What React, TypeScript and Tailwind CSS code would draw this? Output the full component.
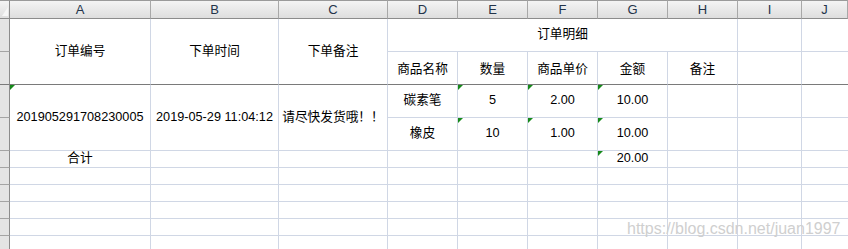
import React from 'react';

const GRID = 'border-[#d0d7e5]';

interface CellProps {
  className?: string;
  mark?: boolean;
  dark?: boolean;
  children?: React.ReactNode;
}

// plain worksheet cell: right + bottom grid line, optional green "number as text" mark
const Cell: React.FC<CellProps> = ({ className = '', mark, dark, children }) => (
  <div
    className={`relative flex items-center justify-center border-r border-b border-r-[#d0d7e5] ${
      dark ? 'border-b-[#7a7a7a]' : 'border-b-[#d0d7e5]'
    } whitespace-nowrap overflow-visible ${className}`}
  >
    {mark && (
      <svg className="absolute left-0 top-0" width="5" height="5" viewBox="0 0 5 5">
        <polygon points="0,0 5,0 0,5" fill="#16891b" />
      </svg>
    )}
    {children}
  </div>
);

const RowHead: React.FC<{ dark?: boolean }> = ({ dark }) => (
  <div
    className={`bg-[#e4e4e4] border-r border-b border-r-[#8c8c8c] ${
      dark ? 'border-b-[#7a7a7a]' : 'border-b-[#a4a4a4]'
    }`}
  />
);

const letters = ['A', 'B', 'C', 'D', 'E', 'F', 'G', 'H', 'I', 'J'];

const App: React.FC = () => {
  return (
    <div className="relative w-[848px] h-[249px] overflow-hidden bg-white font-['Liberation_Sans','Noto_Sans_CJK_SC',sans-serif] text-[12.7px] text-black">
      <div className="grid grid-cols-[10px_141px_128px_109px_70px_70px_70px_70px_70px_64px_1fr] grid-rows-[19px_33px_33px_33px_33px_17px_17px_17px_17px_17px_17px]">
        {/* column header row */}
        <div className="relative border-t border-t-[#9a9a9a] bg-gradient-to-b from-[#f4f4f4] to-[#dedede] border-r border-b border-r-[#8c8c8c] border-b-[#8c8c8c]">
          <svg className="absolute left-[2px] top-[6px]" width="6" height="9" viewBox="0 0 6 9">
            <polygon points="6,0 6,9 0,9" fill="#f6f6f6" />
          </svg>
        </div>
        {letters.map((l) => (
          <div
            key={l}
            className="flex items-center justify-center border-t border-t-[#9a9a9a] bg-gradient-to-b from-[#f4f4f4] to-[#dedede] border-r border-b border-r-[#a8a8a8] border-b-[#8c8c8c] text-[13px] text-[#23344a]"
          >
            {l}
          </div>
        ))}

        {/* row 1 */}
        <RowHead />
        <Cell className="row-span-2" dark>订单编号</Cell>
        <Cell className="row-span-2" dark>下单时间</Cell>
        <Cell className="row-span-2" dark>下单备注</Cell>
        <Cell className="col-span-5">订单明细</Cell>
        <Cell />
        <div className={`border-b ${GRID}`} />

        {/* row 2 */}
        <RowHead dark />
        <Cell dark className="pt-[3px]">商品名称</Cell>
        <Cell dark className="pt-[3px]">数量</Cell>
        <Cell dark className="pt-[3px]">商品单价</Cell>
        <Cell dark className="pt-[3px]">金额</Cell>
        <Cell dark className="pt-[3px]">备注</Cell>
        <Cell dark />
        <div className="border-b border-b-[#7a7a7a]" />

        {/* row 3 */}
        <RowHead />
        <Cell className="row-span-2" mark>201905291708230005</Cell>
        <Cell className="row-span-2">2019-05-29 11:04:12</Cell>
        <Cell className="row-span-2">请尽快发货哦！！</Cell>
        <Cell>碳素笔</Cell>
        <Cell mark>5</Cell>
        <Cell mark>2.00</Cell>
        <Cell mark>10.00</Cell>
        <Cell />
        <Cell />
        <div className={`border-b ${GRID}`} />

        {/* row 4 */}
        <RowHead />
        <Cell>橡皮</Cell>
        <Cell mark>10</Cell>
        <Cell mark>1.00</Cell>
        <Cell mark>10.00</Cell>
        <Cell />
        <Cell />
        <div className={`border-b ${GRID}`} />

        {/* row 5 */}
        <RowHead />
        <Cell>合计</Cell>
        <Cell />
        <Cell />
        <Cell />
        <Cell />
        <Cell />
        <Cell mark>20.00</Cell>
        <Cell />
        <Cell />
        <div className={`border-b ${GRID}`} />

        {/* empty rows */}
        {[0, 1, 2, 3, 4, 5].map((r) => (
          <React.Fragment key={r}>
            <RowHead />
            {[0, 1, 2, 3, 4, 5, 6, 7, 8].map((c) => (
              <Cell key={c} />
            ))}
            <div className={`border-b ${GRID}`} />
          </React.Fragment>
        ))}
      </div>

      <div className="absolute left-[627px] top-[220px] text-[16px] leading-[18px] text-[#cfcfcf] font-['Liberation_Sans',sans-serif]">
        https://blog.csdn.net/juan1997
      </div>
    </div>
  );
};

export default App;
